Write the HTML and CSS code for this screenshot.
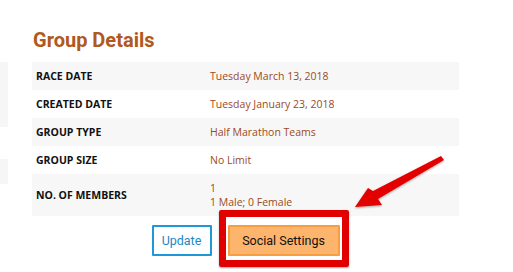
FILE: index.html
```html
<!DOCTYPE html>
<html>
<head>
<meta charset="utf-8">
<link rel="stylesheet" href="styles.css">
</head>
<body>
<div class="page">
  <aside class="side">
    <div class="side-block one"></div>
    <div class="side-block two"></div>
  </aside>
  <main class="main">
    <h2 class="title">Group Details</h2>
    <table class="details">
      <tr class="odd"><th>RACE DATE</th><td>Tuesday March 13, 2018</td></tr>
      <tr><th>CREATED DATE</th><td>Tuesday January 23, 2018</td></tr>
      <tr class="odd"><th>GROUP TYPE</th><td>Half Marathon Teams</td></tr>
      <tr><th>GROUP SIZE</th><td>No Limit</td></tr>
      <tr class="odd tall"><th>NO. OF MEMBERS</th><td>1<br>1 Male; 0 Female</td></tr>
    </table>
    <div class="actions">
      <button class="btn update">Update</button>
      <button class="btn social">Social Settings</button>
    </div>
  </main>
</div>
<div class="highlight"></div>
<svg class="arrow" width="513" height="272" viewBox="0 0 513 272">
  <defs>
    <filter id="sh" x="-20%" y="-20%" width="140%" height="140%">
      <feDropShadow dx="0" dy="1" stdDeviation="1" flood-color="#000" flood-opacity="0.35"/>
    </filter>
  </defs>
  <polygon filter="url(#sh)" fill="#e30000" points="441,156 444,160 378,199 382,205 355,207 368,188 373,191"/>
</svg>
</body>
</html>
```
FILE: styles.css
```css
html, body {
  margin: 0;
  padding: 0;
  background: #fff;
}
body {
  width: 513px;
  height: 272px;
  overflow: hidden;
  position: relative;
  font-family: "Open Sans", "Liberation Sans", sans-serif;
}
.page {
  display: flex;
  gap: 24px;
}
.side {
  width: 8px;
  display: flex;
  flex-direction: column;
  padding-top: 62px;
}
.side-block {
  background: #f6f6f6;
}
.side-block.one { height: 65px; }
.side-block.two { height: 25px; margin-top: 32px; }
.main {
  width: 427px;
}
.title {
  margin: 0 0 10px 1px;
  padding-top: 28px;
  font-family: Roboto, "Liberation Sans", sans-serif;
  font-weight: 700;
  font-size: 20px;
  line-height: 24px;
  color: #b1581b;
}
.details {
  width: 427px;
  border-collapse: collapse;
  font-size: 10.5px;
}
.details tr { height: 28px; }
.details tr.tall { height: 42px; }
.details tr.odd { background: #f7f7f7; }
.details th {
  text-align: left;
  font-weight: 700;
  color: #111;
  padding: 0 0 0 4px;
  width: 174px;
  vertical-align: middle;
}
.details td {
  color: #9c4a1c;
  padding: 0;
  line-height: 14px;
  vertical-align: middle;
}
.actions {
  display: flex;
  justify-content: center;
  gap: 16px;
  margin-top: 9px;
}
.btn {
  font-family: Roboto, "Liberation Sans", sans-serif;
  height: 31px;
  box-sizing: border-box;
  margin: 0;
  padding: 0;
  border-radius: 1px;
  font-size: 12.5px;
}
.update {
  width: 60px;
  background: #fff;
  border: 2px solid #1e98d8;
  color: #1d86c6;
}
.social {
  width: 112px;
  background: #fdb46d;
  border: 2px solid #f99d41;
  color: #111;
}
.highlight {
  position: absolute;
  left: 219px;
  top: 210px;
  width: 130px;
  height: 57px;
  box-sizing: border-box;
  border: 7px solid #e10000;
  border-radius: 2px;
  box-shadow: 0 1px 2px rgba(0,0,0,0.35);
}
.arrow {
  position: absolute;
  left: 0;
  top: 0;
  pointer-events: none;
}
```
